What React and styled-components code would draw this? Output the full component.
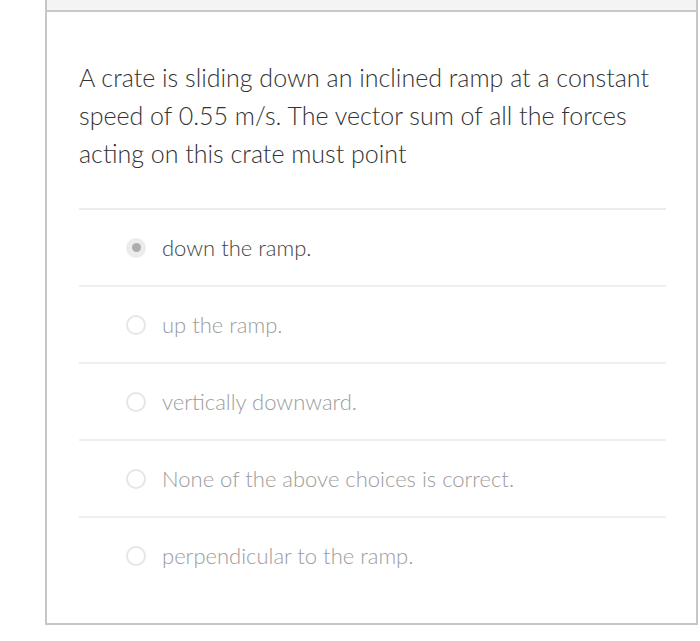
import React from 'react';
import styled, { createGlobalStyle } from 'styled-components';

const GlobalStyle = createGlobalStyle`
  html, body {
    margin: 0;
    padding: 0;
    background: #ffffff;
  }
  body {
    font-family: Lato, "Open Sans", sans-serif;
  }
`;

const Page = styled.div`
  width: 700px;
  height: 641px;
  overflow: hidden;
  background: #fff;
`;

const Card = styled.div`
  margin-left: 45px;
  width: 649px;
  border-left: 2px solid #c6c6c6;
  border-right: 2px solid #c6c6c6;
  border-bottom: 2px solid #c6c6c6;
  background: #fff;
`;

const CardHeader = styled.div`
  height: 10px;
  background: #f4f4f4;
  border-bottom: 2px solid #c8c8c8;
`;

const Body = styled.div`
  padding: 46px 30px 30px 32px;
`;

const Question = styled.p`
  margin: 0 0 36px;
  font-size: 25px;
  line-height: 38px;
  color: #333333;
  font-weight: 300;
`;

const Choices = styled.ul`
  list-style: none;
  margin: 0;
  padding: 0;
  border-top: 2px solid #ececec;
`;

const Choice = styled.li`
  display: flex;
  align-items: center;
  height: 75px;
  padding-left: 47px;
  gap: 16px;
  & + & {
    border-top: 2px solid #efefef;
  }
`;

const Radio = styled.span`
  box-sizing: border-box;
  width: 20px;
  height: 20px;
  border-radius: 50%;
  display: flex;
  align-items: center;
  justify-content: center;
  border: 2px solid ${p => (p.$checked ? '#ececec' : '#e6e6e6')};
  background: ${p => (p.$checked ? '#ececec' : '#fff')};
  &::after {
    content: '';
    display: ${p => (p.$checked ? 'block' : 'none')};
    width: 9px;
    height: 9px;
    border-radius: 50%;
    background: #adadad;
  }
`;

const Label = styled.span`
  font-size: 22px;
  line-height: 26px;
  color: ${p => (p.$checked ? '#444444' : '#9c9c9c')};
  font-weight: 300;
`;

const choices = [
  { id: 'a', text: 'down the ramp.', checked: true },
  { id: 'b', text: 'up the ramp.' },
  { id: 'c', text: 'vertically downward.' },
  { id: 'd', text: 'None of the above choices is correct.' },
  { id: 'e', text: 'perpendicular to the ramp.' },
];

export default function App() {
  return (
    <Page>
      <GlobalStyle />
      <Card>
        <CardHeader />
        <Body>
          <Question>
            A crate is sliding down an inclined ramp at a constant speed of 0.55 m/s. The vector sum of all the forces acting on this crate must point
          </Question>
          <Choices>
            {choices.map(c => (
              <Choice key={c.id}>
                <Radio $checked={c.checked} />
                <Label $checked={c.checked}>{c.text}</Label>
              </Choice>
            ))}
          </Choices>
        </Body>
      </Card>
    </Page>
  );
}
